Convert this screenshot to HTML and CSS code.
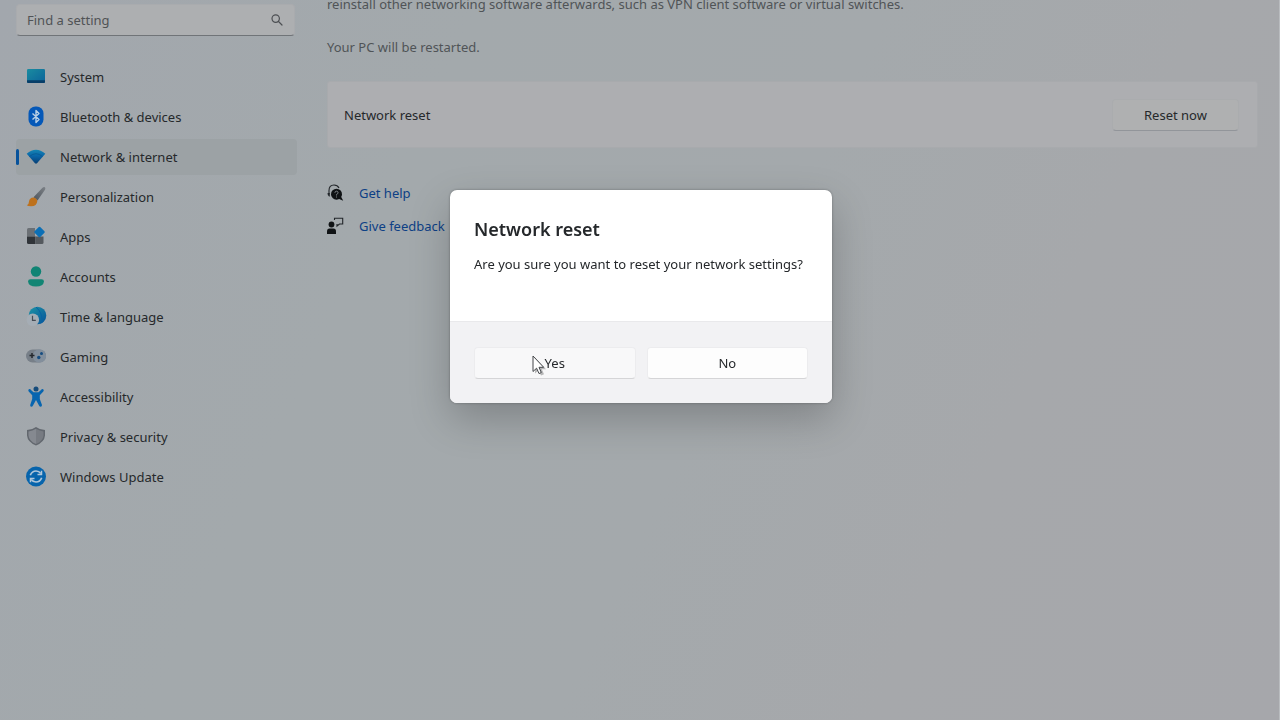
FILE: index.html
```html
<!DOCTYPE html>
<html lang="en">
<head>
<meta charset="utf-8">
<meta name="viewport" content="width=device-width, initial-scale=1">
<title>Settings - Network reset</title>
<link rel="stylesheet" href="styles.css">
</head>
<body>
<div class="app">
  <aside class="sidebar">
    <div class="search">
      <input class="search-input" type="text" placeholder="Find a setting" aria-label="Find a setting">
      <svg class="search-icon" viewBox="0 0 14 14" fill="none" stroke="#4c4f53" stroke-width="1.2" stroke-linecap="round"><circle cx="5.7" cy="5.6" r="3.700"/><path d="M8.500 8.500 12 12"/></svg>
    </div>
    <nav class="nav">
      <a class="nav-item" href="#"><svg class="nav-icon" viewBox="0 0 20 20"><defs><linearGradient id="sys" x1="0" y1="0" x2="1" y2="1"><stop offset="0" stop-color="#1a8ca0"/><stop offset="1" stop-color="#0b629a"/></linearGradient></defs><rect x="1" y="2" width="18" height="14" rx="1.2" fill="url(#sys)"/><path d="M1 13.2h18v1.600q0 1.2-1.2 1.2H2.2Q1 16 1 14.800z" fill="#083e68"/></svg>System</a>
      <a class="nav-item" href="#"><svg class="nav-icon" viewBox="0 0 20 20"><rect x="2.500" y="-.5" width="15" height="20" rx="7" fill="#0558b8"/><path d="M6.500 6.500 13 12.500 10 15.500V3.500L13 6.500 6.500 12.500" fill="none" stroke="#b9cfe6" stroke-width="1.4" stroke-linejoin="round"/></svg>Bluetooth &amp; devices</a>
      <a class="nav-item selected" href="#" aria-current="page"><svg class="nav-icon" viewBox="0 0 20 20"><defs><linearGradient id="net" x1="0" y1="0" x2="0" y2="1"><stop offset="0" stop-color="#1585b3"/><stop offset=".45" stop-color="#0965a8"/><stop offset="1" stop-color="#073e73"/></linearGradient></defs><path d="M.7 6.800Q10-1.200 19.300 6.800L11 16.300Q10 17.200 9 16.300z" fill="url(#net)"/><path d="M3.400 9.600Q10 3.800 16.600 9.600" fill="none" stroke="#07558d" stroke-width=".7"/></svg>Network &amp; internet</a>
      <a class="nav-item" href="#"><svg class="nav-icon" viewBox="0 0 20 20"><defs><linearGradient id="br" x1="1" y1="0" x2="0" y2="1"><stop offset="0" stop-color="#7c8186"/><stop offset="1" stop-color="#4e555d"/></linearGradient></defs><path d="M18.500 0Q20 .6 19 2.800L11.500 13.500 7.500 10.300 16.500.8Q17.500-.2 18.500 0z" fill="url(#br)"/><path d="M7.300 10.500Q11 11 11.300 14 11 19.200 5 19.300 2 19.300.8 18.300 3 17.500 3 14.500 3.500 10.800 7.300 10.500z" fill="#bd711d"/></svg>Personalization</a>
      <a class="nav-item" href="#"><svg class="nav-icon" viewBox="0 0 20 20"><path d="M1 2.500Q1 1 2.500 1H9v8.500H1z" fill="#6b7075"/><path d="M1 9.500h8.500V17h-7Q1 17 1 15.500z" fill="#303439"/><path d="M9.500 9.500H17.500v6Q17.500 17 16 17H9.500z" fill="#54595e"/><rect x="9.500" y="1" width="8" height="8" rx="1" transform="rotate(45 13.500 5)" fill="#0c6fb5"/></svg>Apps</a>
      <a class="nav-item" href="#"><svg class="nav-icon" viewBox="0 0 20 20"><circle cx="10" cy="4.500" r="5.200" fill="#108474"/><path d="M4.500 12.200h11Q18 12.200 18 14.500 17.500 19.500 10 19.500T2 14.500Q2 12.200 4.500 12.200z" fill="#128574"/></svg>Accounts</a>
      <a class="nav-item" href="#"><svg class="nav-icon" viewBox="0 0 20 20"><defs><linearGradient id="ti" x1="0" y1="0" x2="1" y2="1"><stop offset="0" stop-color="#1e94a5"/><stop offset="1" stop-color="#07539a"/></linearGradient></defs><circle cx="11.500" cy="8.500" r="8.800" fill="url(#ti)"/><path d="M10 0Q17 6 16 16" stroke="#0862a5" stroke-width="1" fill="none"/><circle cx="6.800" cy="12.800" r="6.300" fill="#a5adb5"/><path d="M6.500 8.800v4.500h3.300" fill="none" stroke="#454c54" stroke-width="1.200"/></svg>Time &amp; language</a>
      <a class="nav-item" href="#"><svg class="nav-icon" viewBox="0 0 20 20"><rect x="0" y="2.500" width="20" height="13" rx="6.500" fill="#777f88"/><rect x="7" y="2.500" width="13" height="13" rx="6" fill="#838f9c"/><path d="M6 6v5M3.500 8.500h5" stroke="#25292e" stroke-width="1.500"/><circle cx="15.500" cy="6.500" r="1.500" fill="#174d80"/><circle cx="12.800" cy="10.500" r="1.700" fill="#174d80"/></svg>Gaming</a>
      <a class="nav-item" href="#"><svg class="nav-icon" viewBox="0 0 20 20"><circle cx="10" cy="2" r="2.500" fill="#164c7b"/><path d="M2.800 2.200Q4.300 1.500 5 3L7.500 5.300h5L15 3Q16 1.500 17.200 2.200 18.400 3 17.300 4.500L13.800 8.200V12L16 18Q16 19.600 14.700 19.700 13.500 19.700 13 18.500L10 13 7 18.500Q6.500 19.700 5.200 19.700 4 19.500 4.200 18L6.200 12V8.200L2.700 4.500Q1.800 3 2.800 2.200z" fill="#0865af"/></svg>Accessibility</a>
      <a class="nav-item" href="#"><svg class="nav-icon" viewBox="0 0 20 20"><path d="M10 0Q14 3 19 3v5.500Q18.500 15 10 18.500 1.500 15 1 8.500V3Q6 3 10 0z" fill="#62676e"/><path d="M10 1.800Q13.500 4 17.500 4.400v4Q17 14 10 17z" fill="#777b82"/><path d="M10 1.800Q6.500 4 2.500 4.400v4Q3 14 10 17z" fill="#858990"/></svg>Privacy &amp; security</a>
      <a class="nav-item" href="#"><svg class="nav-icon" viewBox="0 0 20 20"><circle cx="10" cy="9.500" r="10" fill="#0764ac"/><path d="M4.300 8.300Q6 4 10 4 13 4 14.800 6.500M15.700 10.700Q14 15 10 15 7 15 5.200 12.500" fill="none" stroke="#b0c6da" stroke-width="1.700"/><path d="M15.500 3.800v3.800h-4M4.500 15.200v-3.800h4" fill="none" stroke="#b0c6da" stroke-width="1.500"/></svg>Windows Update</a>
    </nav>
  </aside>
  <main class="content">
    <p class="note">reinstall other networking software afterwards, such as VPN client software or virtual switches.</p>
    <p class="note">Your PC will be restarted.</p>
    <section class="card">
      <span>Network reset</span>
      <button class="reset-button" type="button">Reset now</button>
    </section>
    <div class="links">
      <a class="link" href="#"><svg class="link-icon" viewBox="0 0 18 18"><path d="M2 10V6.500Q2 1 7 1 10.500 1 12 4" fill="none" stroke="#22262a" stroke-width="1.100"/><path d="M.5 9h2.300v3.500H2Q.5 12 .5 9z" fill="#22262a"/><circle cx="9.500" cy="10.200" r="5.500" fill="#101315"/><path d="M11 14.500 14 12.500l2.200 4.200z" fill="#101315"/><path d="M7.900 8.800Q8 7.200 9.500 7.200T11.100 8.800Q11 9.800 9.500 10.500v1M9.500 12.500v1" fill="none" stroke="#7c8185" stroke-width="1"/></svg>Get help</a>
      <a class="link" href="#"><svg class="link-icon" viewBox="0 0 18 18"><circle cx="4.500" cy="7.500" r="2.900" fill="#101315"/><path d="M0 17v-2.500Q0 11.500 2.500 11.500h4Q9 11.500 9 14.500V17z" fill="#101315"/><path d="M7.500 3V1.200h8.200V7H12.500L10 9V7" fill="none" stroke="#22262a" stroke-width="1.100"/></svg>Give feedback</a>
    </div>
  </main>
</div>
<div class="overlay">
  <div class="dialog" role="dialog" aria-modal="true" aria-labelledby="dialog-title">
    <div class="dialog-body">
      <h1 class="dialog-title" id="dialog-title">Network reset</h1>
      <p class="dialog-text">Are you sure you want to reset your network settings?</p>
    </div>
    <div class="dialog-actions">
      <button class="dialog-button hovered" type="button">Yes</button>
      <button class="dialog-button" type="button">No</button>
    </div>
    <svg class="pointer" viewBox="0 0 14 22"><path d="M3 2.500V18.500L6.500 15.300 9 20.500 12 19.200 9.800 14.300H14z" fill="#8c8c8c" opacity=".6"/><path d="M1 1v15.500L4.600 13.200 7 18.600 9.300 17.500 7 12.300h4.700z" fill="#fff" stroke="#44474a" stroke-width="1"/></svg>
  </div>
</div>
</body>
</html>
```
FILE: styles.css
```css
* { box-sizing: border-box; }
body {
  margin: 0;
  font: 13px/20px "Noto Sans", "Open Sans", sans-serif;
  color: #25282b;
}
a { color: inherit; text-decoration: none; }
button, input { font: inherit; color: inherit; }
.app {
  display: grid;
  grid-template-columns: 297px minmax(0, 1fr);
  gap: 30px;
  min-height: 100vh;
  overflow: hidden;
  background: linear-gradient(115deg, #a2a7ad 0%, #a3a9ac 30%, #a4a9ac 55%, #a6a8ab 75%, #a6a7ab 100%);
  border-right: 1px solid #b9bcbf;
}
.sidebar { padding: 4px 0 0 16px; }
.search {
  display: flex;
  align-items: center;
  height: 32px;
  margin-right: 2px;
  padding: 0 10px;
  background: #adafb1;
  border: 1px solid #a9abae;
  border-bottom: 1px solid #707478;
  border-radius: 4px;
}
.search-input {
  flex: 1;
  min-width: 0;
  padding: 0;
  border: 0;
  outline: 0;
  background: none;
}
.search-input::placeholder { color: #505356; opacity: 1; }
.search-icon { width: 14px; height: 14px; }
.nav {
  display: flex;
  flex-direction: column;
  gap: 4px;
  margin-top: 23px;
}
.nav-item {
  position: relative;
  display: flex;
  align-items: center;
  gap: 14px;
  height: 36px;
  padding-left: 10px;
  border-radius: 4px;
}
.nav-icon { width: 20px; height: 20px; overflow: visible; }
.selected { background: #9ca2a5; }
.selected::before {
  content: "";
  position: absolute;
  left: 0;
  top: 10px;
  width: 3px;
  height: 16px;
  border-radius: 2px;
  background: #07529b;
}
.content { padding-right: 21px; }
.note { margin: -6px 0 23px; color: #505457; }
.note + .note { margin: 0 0 24px; }
.card {
  display: flex;
  align-items: center;
  justify-content: space-between;
  height: 67px;
  padding: 0 18px 0 16px;
  background: #adaeb1;
  border: 1px solid #a8aaad;
  border-radius: 3px;
}
.reset-button {
  width: 127px;
  height: 32px;
  padding: 0;
  background: #afb0b1;
  border: 1px solid #aaacae;
  border-bottom-color: #92959a;
  border-radius: 4px;
}
.links {
  display: flex;
  flex-direction: column;
  align-items: flex-start;
  gap: 13px;
  margin-top: 35px;
}
.link {
  display: flex;
  align-items: center;
  gap: 14px;
  color: #0d4085;
}
.link-icon { width: 18px; height: 18px; }
.overlay {
  position: fixed;
  inset: 0;
  display: flex;
  justify-content: center;
  align-items: flex-start;
  padding: 190px 0 0 2px;
}
.dialog {
  position: relative;
  width: 382px;
  border-radius: 7px;
  background: #fff;
  box-shadow: 0 16px 40px rgba(0, 0, 0, .22), 0 0 3px rgba(0, 0, 0, .3);
}
.dialog-body { height: 131px; padding: 24px 24px 0; }
.dialog-title { margin: 0; font-size: 18px; line-height: 30px; font-weight: 600; }
.dialog-text { margin: 10px 0 0; white-space: nowrap; }
.dialog-actions {
  display: grid;
  grid-template-columns: 1fr 1fr;
  gap: 11px;
  padding: 25px 24px 24px;
  background: #f2f2f4;
  border-top: 1px solid #e9e9eb;
  border-radius: 0 0 7px 7px;
}
.dialog-button {
  height: 32px;
  padding: 0;
  background: #fdfdfd;
  border: 1px solid #ececee;
  border-bottom-color: #d5d5d7;
  border-radius: 4px;
}
.hovered { background: #f8f8f9; }
.pointer {
  position: absolute;
  left: 82px;
  top: 165px;
  width: 14px;
  height: 22px;
}
```
